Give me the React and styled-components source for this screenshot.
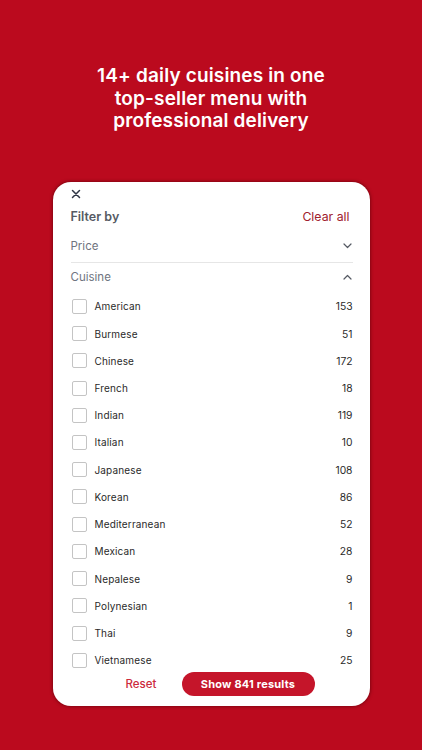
import React from "react";
import styled, { createGlobalStyle } from "styled-components";

const Global = createGlobalStyle`
  html, body { margin: 0; padding: 0; }
  body { background: #bb0a1e; font-family: Inter, "Noto Sans", sans-serif; }
  #root { width: 422px; height: 750px; }
`;

const Page = styled.div`
  width: 422px;
  height: 750px;
  background: #bb0a1e;
  display: flex;
  flex-direction: column;
  align-items: center;
  box-sizing: border-box;
  padding-top: 65px;
`;

const Headline = styled.h1`
  margin: 0;
  color: #fff;
  font-family: Inter, sans-serif;
  font-weight: 600;
  font-size: 19px;
  line-height: 22.6px;
  text-align: center;
  letter-spacing: 0.15px;
`;

const Card = styled.div`
  margin-top: 49px;
  width: 317px;
  height: 524px;
  background: #fff;
  border-radius: 18px;
  box-shadow: 0 0 3px 1px rgba(90, 0, 10, 0.55);
  box-sizing: border-box;
  padding: 7px 17px 0 18px;
  display: flex;
  flex-direction: column;
`;

const Close = styled.button`
  border: 0;
  background: none;
  padding: 0;
  width: 10px;
  height: 10px;
  display: flex;
`;

const HeaderRow = styled.div`
  display: flex;
  justify-content: space-between;
  align-items: center;
  margin-top: 9px;
  height: 18px;
`;

const FilterBy = styled.span`
  font-size: 12.5px;
  font-weight: 600;
  color: #555a63;
`;

const ClearAll = styled.span`
  font-size: 12.3px;
  color: #a0202e;
  padding-right: 3px;
`;

const Section = styled.div`
  display: flex;
  justify-content: space-between;
  align-items: center;
  height: ${(p) => (p.$divider ? "31px" : "29px")};
  margin-top: ${(p) => (p.$divider ? "5px" : "0")};
  border-bottom: ${(p) => (p.$divider ? "1px solid #e6e6e6" : "none")};
  font-size: 11.5px;
  color: #6f7480;
  padding-right: 1px;
`;

const List = styled.div`
  display: flex;
  flex-direction: column;
  margin-top: 1px;
`;

const Row = styled.div`
  display: flex;
  align-items: center;
  height: 27.23px;
`;

const Box = styled.span`
  box-sizing: border-box;
  width: 15px;
  height: 15px;
  border: 1px solid #c4c4c4;
  border-radius: 2px;
  margin-left: 1px;
  margin-right: 8px;
  flex-shrink: 0;
`;

const Label = styled.span`
  flex: 1;
  font-size: 10px;
  color: #2a2a2a;
  letter-spacing: 0.15px;
`;

const Count = styled.span`
  font-size: 10.3px;
  color: #2a2a2a;
`;

const Footer = styled.div`
  display: flex;
  align-items: center;
  margin-top: -2px;
`;

const Reset = styled.span`
  margin-left: 55px;
  width: 56px;
  font-size: 11.5px;
  font-weight: 500;
  color: #cc2a3c;
`;

const ShowBtn = styled.button`
  border: 0;
  width: 133px;
  height: 24px;
  border-radius: 12px;
  background: #c5152a;
  color: #fff;
  font-family: Inter, sans-serif;
  font-weight: 700;
  font-size: 11px;
  letter-spacing: 0.2px;
`;

const Chevron = ({ up }) => (
  <svg width="9" height="6" viewBox="0 0 9 6" fill="none">
    <path
      d={up ? "M1 5 L4.5 1.5 L8 5" : "M1 1 L4.5 4.5 L8 1"}
      stroke="#555a63"
      strokeWidth="1.2"
      strokeLinecap="round"
      strokeLinejoin="round"
    />
  </svg>
);

const items = [
  ["American", 153],
  ["Burmese", 51],
  ["Chinese", 172],
  ["French", 18],
  ["Indian", 119],
  ["Italian", 10],
  ["Japanese", 108],
  ["Korean", 86],
  ["Mediterranean", 52],
  ["Mexican", 28],
  ["Nepalese", 9],
  ["Polynesian", 1],
  ["Thai", 9],
  ["Vietnamese", 25],
];

export default function App() {
  return (
    <>
      <Global />
      <Page>
        <Headline>
          14+ daily cuisines in one
          <br />
          top-seller menu with
          <br />
          professional delivery
        </Headline>
        <Card>
          <Close aria-label="close">
            <svg width="10" height="10" viewBox="0 0 10 10">
              <path d="M1.5 1.5 L8.5 8.5 M8.5 1.5 L1.5 8.5" stroke="#2f3545" strokeWidth="1.5" strokeLinecap="round" />
            </svg>
          </Close>
          <HeaderRow>
            <FilterBy>Filter by</FilterBy>
            <ClearAll>Clear all</ClearAll>
          </HeaderRow>
          <Section $divider>
            <span>Price</span>
            <Chevron />
          </Section>
          <Section>
            <span>Cuisine</span>
            <Chevron up />
          </Section>
          <List>
            {items.map(([name, n]) => (
              <Row key={name}>
                <Box />
                <Label>{name}</Label>
                <Count>{n}</Count>
              </Row>
            ))}
          </List>
          <Footer>
            <Reset>Reset</Reset>
            <ShowBtn>Show 841 results</ShowBtn>
          </Footer>
        </Card>
      </Page>
    </>
  );
}
